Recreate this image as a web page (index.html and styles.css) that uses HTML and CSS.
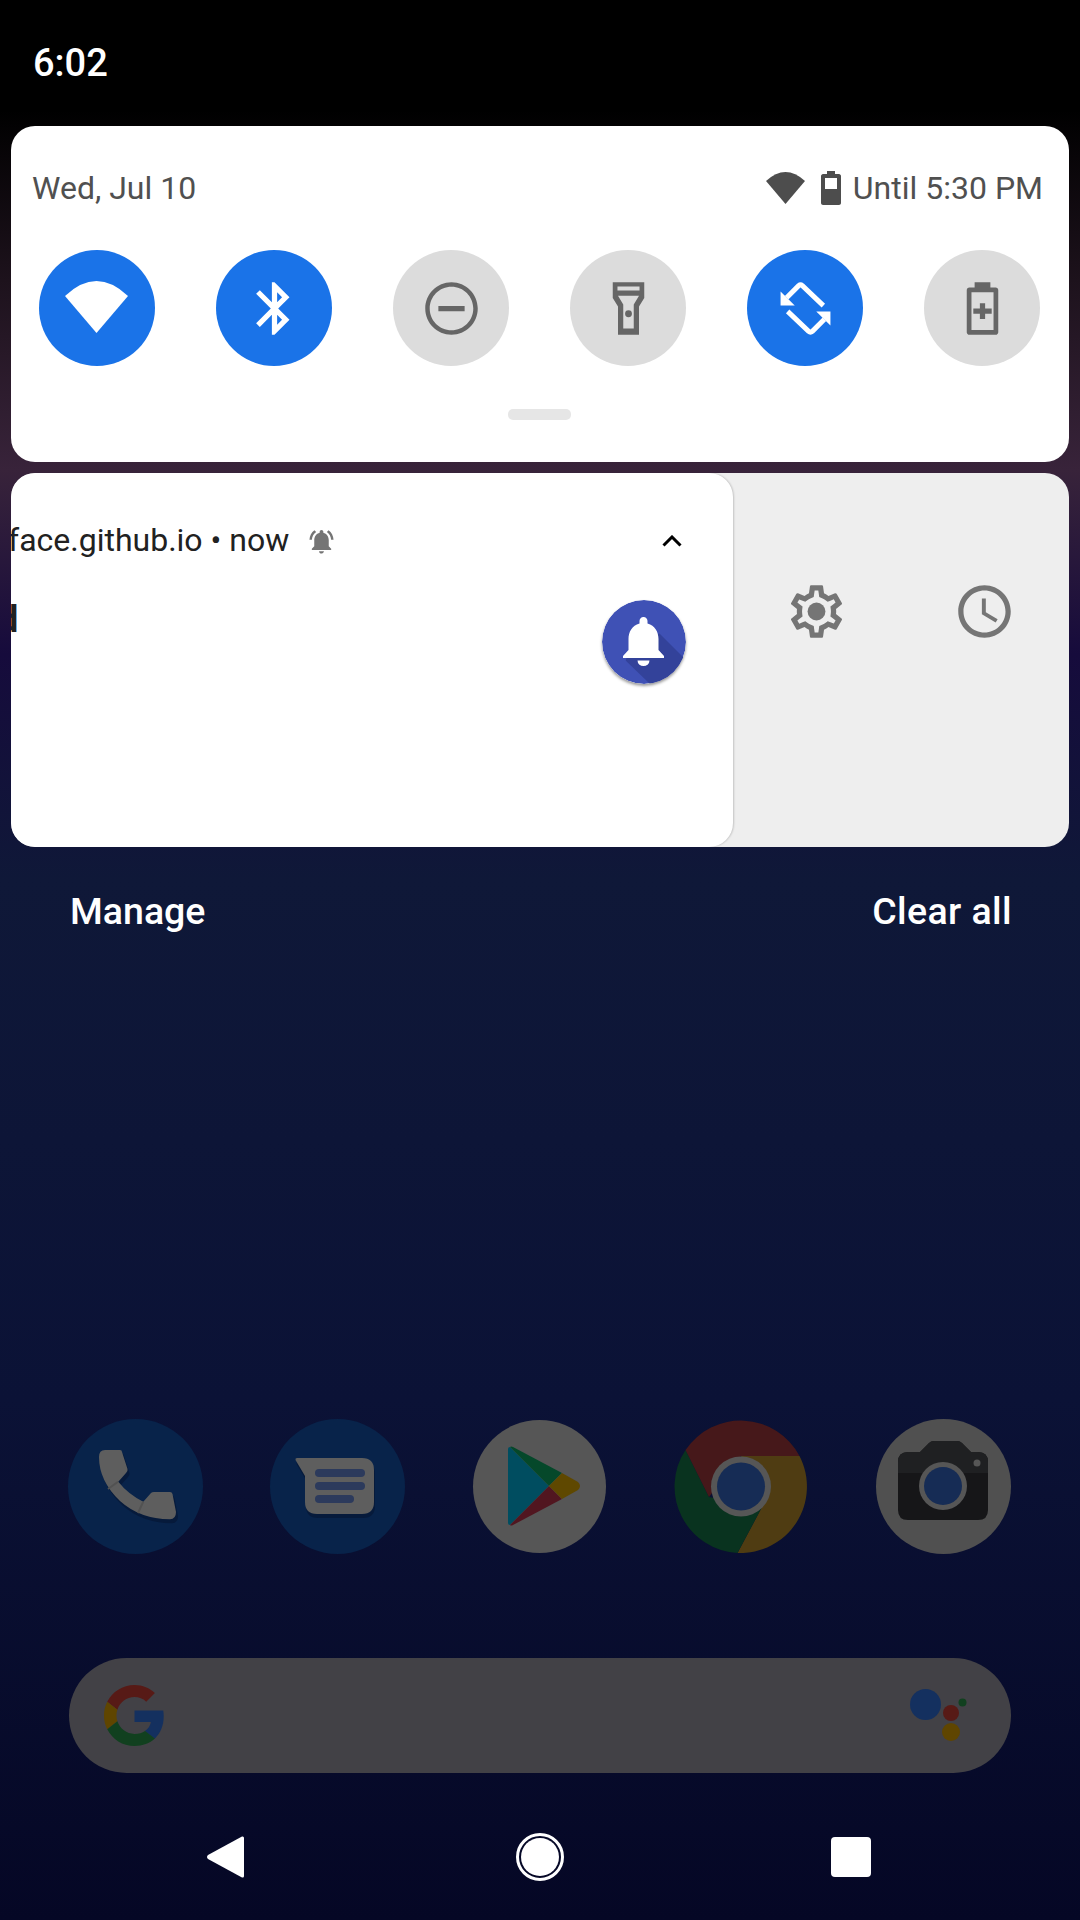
FILE: index.html
```html
<!DOCTYPE html>
<html lang="en">
<head>
  <meta charset="UTF-8" />
  <title>Notification shade</title>
  <link rel="stylesheet" href="styles.css">
</head>
<body>

  <div class="status-bar">6:02</div>

  <div class="card qs-card">
    <div class="qs-header">
      <span>Wed, Jul 10</span>
      <div class="qs-status">
        <svg class="status-wifi" viewBox="0 0 39 32"><path d="M0 9Q19.5 -9 39 9L19.5 32Z"/></svg>
        <svg class="status-battery" viewBox="0 0 20 34"><path fill-rule="evenodd" d="M6 0h8v3h4c1 0 2 1 2 2v27c0 1-1 2-2 2H2c-1 0-2-1-2-2V5c0-1 1-2 2-2h4zM4 7v11h12V7z"/></svg>
        <span>Until 5:30 PM</span>
      </div>
    </div>

    <div class="qs-row">
      <div class="qs-btn on">
        <svg viewBox="0 0 116 116"><path d="M26 46Q57.5 16 89 46L57.5 83Z"/></svg>
      </div>
      <div class="qs-btn on">
        <svg class="qs-icon" viewBox="0 0 24 24"><path d="M17.71 7.71L12 2h-1v7.59L6.41 5 5 6.41 10.59 12 5 17.59 6.41 19 11 14.41V22h1l5.71-5.71-4.3-4.29 4.3-4.29zM13 5.83l1.88 1.88L13 9.59V5.83zm1.88 10.46L13 18.17v-3.76l1.88 1.88z"/></svg>
      </div>
      <div class="qs-btn">
        <svg class="qs-icon" viewBox="0 0 24 24"><path d="M7 11v2h10v-2H7zm5-9C6.48 2 2 6.48 2 12s4.48 10 10 10 10-4.48 10-10S17.52 2 12 2zm0 18.3c-4.6 0-8.3-3.7-8.3-8.3S7.4 3.7 12 3.7s8.3 3.7 8.3 8.3-3.7 8.3-8.3 8.3z"/></svg>
      </div>
      <div class="qs-btn">
        <svg class="qs-icon" viewBox="0 0 24 24"><path fill-rule="evenodd" d="M6 2h12v6l-2 3.2V22H8V11.200L6 8zM7.800 3.600v1.500h8.400V3.600zM8 7.100l2 3.400v9.100h4v-9.100l2-3.400z"/><circle cx="12" cy="14" r="1.300"/></svg>
      </div>
      <div class="qs-btn on">
        <svg class="qs-icon" viewBox="0 0 24 24">
          <g>
            <path class="rotate-arm" d="M18.800 10.900L10.800 3.300Q10.100 2.700 9.400 3.300L4.800 7.900"/>
            <path d="M2.500 5.500V10.900H7.900Z"/>
          </g>
          <g transform="rotate(180 12 12)">
            <path class="rotate-arm" d="M18.800 10.900L10.800 3.300Q10.100 2.700 9.400 3.300L4.800 7.900"/>
            <path d="M2.500 5.500V10.900H7.900Z"/>
          </g>
        </svg>
      </div>
      <div class="qs-btn">
        <svg class="qs-icon" viewBox="0 0 24 24"><path fill-rule="evenodd" d="M9 2h6v2h2c.55 0 1 .45 1 1v16c0 .55-.45 1-1 1H7c-.55 0-1-.45-1-1V5c0-.55.45-1 1-1h2zM7.800 5.800v14.400h8.400V5.800zM11 10h2v2h2.500v2H13v2h-2v-2H8.500v-2H11z"/></svg>
      </div>
    </div>

    <div class="pager"></div>
  </div>

  <div class="card notif-card">
    <div class="notif">
      <div class="notif-head">
        <span class="notif-source">face.github.io • now</span>
        <svg class="notif-alert" viewBox="0 0 24 24"><path d="M7.580 4.080L6.150 2.650C3.750 4.480 2.170 7.300 2.030 10.500h2c.15-2.650 1.510-4.970 3.550-6.420zm12.390 6.420h2c-.15-3.200-1.730-6.020-4.120-7.850l-1.420 1.430c2.020 1.450 3.390 3.770 3.540 6.420zM18 11c0-3.070-1.640-5.640-4.500-6.320V4c0-.83-.67-1.500-1.500-1.500s-1.500.67-1.500 1.500v.68C7.630 5.360 6 7.920 6 11v5l-2 2v1h16v-1l-2-2v-5zm-6 11c.14 0 .27-.01.4-.04.65-.14 1.180-.58 1.440-1.180.1-.24.15-.5.15-.78h-4c.01 1.100.9 2 2.010 2z"/></svg>
        <svg class="notif-chevron" viewBox="0 0 20 12"><path d="M1.500 10.500L10 2l8.500 8.500"/></svg>
      </div>
      <div class="notif-body">
        <span class="notif-title">d</span>
        <svg class="big-bell" viewBox="0 0 84 84">
          <circle cx="42" cy="42" r="42" fill="#3f51b5"/>
          <path fill="#33429a" d="M57 33L84 60 70 80 48 84 21 58Z" clip-path="circle(42px at 42px 42px)"/>
          <path fill="#fff" d="M41.500 17c-2.400 0-4 1.800-4 4v2.500C30 25.500 26.500 32 26.500 39v11L21 56v2h41v-2l-5.500-6V39c0-7-3.500-13.500-11-15.500V21c0-2.200-1.600-4-4-4z"/>
          <path fill="#fff" d="M35.500 60.500h12a6 5.500 0 0 1-12 0z"/>
        </svg>
      </div>
    </div>
    <div class="notif-actions">
      <svg viewBox="0 0 24 24"><path d="M19.430 12.980c.04-.32.07-.64.07-.98 0-.34-.03-.66-.07-.98l2.110-1.650c.19-.15.24-.42.12-.64l-2-3.460c-.09-.16-.26-.25-.44-.25-.06 0-.12.01-.17.03l-2.490 1c-.52-.4-1.080-.73-1.690-.98l-.38-2.650C14.460 2.180 14.250 2 14 2h-4c-.25 0-.46.18-.49.42l-.38 2.650c-.61.25-1.170.59-1.690.98l-2.490-1c-.06-.02-.12-.03-.18-.03-.17 0-.34.09-.43.25l-2 3.460c-.13.22-.07.49.12.64l2.110 1.650c-.04.32-.07.65-.07.98 0 .33.03.66.07.98l-2.110 1.650c-.19.15-.24.42-.12.64l2 3.460c.09.16.26.25.44.25.06 0 .12-.01.17-.03l2.490-1c.52.4 1.080.73 1.690.98l.38 2.650c.03.24.24.42.49.42h4c.25 0 .46-.18.49-.42l.38-2.650c.61-.25 1.170-.59 1.690-.98l2.490 1c.06.02.12.03.18.03.17 0 .34-.09.43-.25l2-3.460c.12-.22.07-.49-.12-.64l-2.110-1.650zm-1.980-1.710c.04.31.05.52.05.73 0 .21-.02.43-.05.73l-.14 1.130.89.7 1.080.84-.7 1.210-1.270-.51-1.040-.42-.9.68c-.43.32-.84.56-1.250.73l-1.060.43-.16 1.130-.2 1.350h-1.400l-.19-1.350-.16-1.130-1.060-.43c-.43-.18-.83-.41-1.230-.71l-.91-.7-1.060.43-1.270.51-.7-1.210 1.080-.84.89-.7-.14-1.130c-.03-.31-.05-.54-.05-.74s.02-.43.05-.73l.14-1.130-.89-.7-1.080-.84.7-1.210 1.270.51 1.040.42.9-.68c.43-.32.84-.56 1.250-.73l1.060-.43.16-1.130.2-1.350h1.390l.19 1.350.16 1.130 1.060.43c.43.18.83.41 1.230.71l.91.7 1.060-.43 1.270-.51.7 1.210-1.070.85-.89.7.14 1.130z"/><circle cx="12" cy="12" r="3.400"/></svg>
      <svg viewBox="0 0 24 24"><path d="M11.990 2C6.470 2 2 6.480 2 12s4.470 10 9.990 10C17.520 22 22 17.520 22 12S17.520 2 11.990 2zM12 20c-4.420 0-8-3.580-8-8s3.580-8 8-8 8 3.580 8 8-3.580 8-8 8zm.5-13H11v6l5.250 3.150.75-1.230-4.500-2.670z"/></svg>
    </div>
  </div>

  <div class="shade-actions">
    <span>Manage</span>
    <span class="clear-all">Clear all</span>
  </div>

  <div class="dock">
    <svg viewBox="0 0 135 135">
      <circle cx="67.500" cy="67.500" r="67.500" fill="#08234a"/>
      <path fill="#061a3b" transform="translate(2 4)" d="M37 31H52Q54 31 54 33L59.500 50Q60 52 58 54L50.300 62.700Q60 75 75.300 82.700L83 74Q84 73 86 73H102Q104 73 104.500 75L108 93Q108 100 102 100.300Q72 100 52 82Q31 62 31 38Q31 31 37 31Z"/>
      <path fill="#5e5e5e" d="M37 31H52Q54 31 54 33L59.500 50Q60 52 58 54L50.300 62.700Q60 75 75.300 82.700L83 74Q84 73 86 73H102Q104 73 104.500 75L108 93Q108 100 102 100.300Q72 100 52 82Q31 62 31 38Q31 31 37 31Z"/>
      <path stroke="#525252" stroke-width="2" fill="none" d="M50 62.700L40 70M75.300 82.700L70 94"/>
    </svg>
    <svg viewBox="0 0 135 135">
      <circle cx="67.500" cy="67.500" r="67.500" fill="#08234a"/>
      <path fill="#061a3b" transform="translate(1 4)" d="M27 39H92Q104 39 104 51V83Q104 95 92 95H47Q35 95 35 83V57L25.500 41Q25 39 27 39Z"/>
      <path fill="#5e5e5e" d="M27 39H92Q104 39 104 51V83Q104 95 92 95H47Q35 95 35 83V57L25.500 41Q25 39 27 39Z"/>
      <rect x="45" y="50" width="50" height="8" rx="4" fill="#2c3a5c"/>
      <rect x="45" y="63" width="50" height="8" rx="4" fill="#2c3a5c"/>
      <rect x="45" y="76" width="39" height="8" rx="4" fill="#2c3a5c"/>
    </svg>
    <svg viewBox="0 0 135 135">
      <circle cx="67.500" cy="67.500" r="66.500" fill="#565656"/>
      <path fill="#004d60" d="M36 30Q36 28 38 28L77 67 38 106Q36 106 36 104Z"/>
      <path fill="#05482a" d="M38 28Q39 27 41 28L90 54 77 67Z"/>
      <path fill="#511620" d="M38 106Q39 107 41 106L90 80 77 67Z"/>
      <path fill="#5f4800" d="M90 54L106 63Q110 67 106 71L90 80 77 67Z"/>
    </svg>
    <svg viewBox="0 0 135 135">
      <path fill="#4f3c12" d="M125.500 37A66.500 66.500 0 0 1 63.500 134L88 88 67 37Z"/>
      <path fill="#09331f" d="M11.500 31A66.500 66.500 0 0 0 63.500 134L88 88 35 78Z"/>
      <path fill="#46181a" d="M11.500 31A66.500 66.500 0 0 1 125.500 37H67L35 78Z"/>
      <circle cx="67" cy="67.500" r="30" fill="#565656"/>
      <circle cx="67" cy="67.500" r="24" fill="#162c55"/>
    </svg>
    <svg viewBox="0 0 135 135">
      <circle cx="67.500" cy="67.500" r="67.500" fill="#505050"/>
      <path fill="#161618" d="M22 43Q22 33 32 33H44L53 24Q55 22 58 22H81Q84 22 86 24L95 33H102Q112 33 112 43V91Q112 101 102 101H32Q22 101 22 91Z"/>
      <path fill="#1f2022" d="M22 54V43Q22 33 32 33H44L53 24Q55 22 58 22H81Q84 22 86 24L95 33H102Q112 33 112 43V54Z"/>
      <circle cx="67" cy="67" r="24" fill="#565656"/>
      <circle cx="67" cy="67" r="19" fill="#162c55"/>
      <circle cx="101" cy="44" r="3.500" fill="#565656"/>
    </svg>
  </div>

  <div class="search">
    <svg class="search-g" viewBox="0 0 48 48">
      <path fill="#571a16" d="M24 9.500c3.540 0 6.710 1.220 9.210 3.600l6.850-6.850C35.900 2.380 30.470 0 24 0 14.620 0 6.510 5.380 2.560 13.220l7.980 6.190C12.430 13.720 17.740 9.500 24 9.500z"/>
      <path fill="#14305f" d="M46.980 24.550c0-1.570-.15-3.090-.38-4.550H24v9.020h12.940c-.58 2.960-2.260 5.480-4.780 7.180l7.730 6c4.510-4.180 7.090-10.360 7.090-17.650z"/>
      <path fill="#5f4500" d="M10.530 28.590c-.48-1.450-.76-2.990-.76-4.590s.27-3.140.76-4.590l-7.980-6.190C.92 16.460 0 20.120 0 24c0 3.880.92 7.540 2.560 10.780l7.970-6.190z"/>
      <path fill="#11401f" d="M24 48c6.480 0 11.930-2.130 16.040-5.810l-7.730-6c-2.150 1.450-4.920 2.300-8.310 2.300-6.260 0-11.570-4.220-13.470-9.910l-7.980 6.190C6.510 42.620 14.620 48 24 48z"/>
    </svg>
    <svg class="search-mic" viewBox="0 0 57 53">
      <circle cx="15.500" cy="15.500" r="15.500" fill="#14305f"/>
      <circle cx="41" cy="24" r="8" fill="#571a16"/>
      <circle cx="52.500" cy="13.500" r="4" fill="#11401f"/>
      <circle cx="41" cy="43" r="9" fill="#5f4500"/>
    </svg>
  </div>

  <div class="nav">
    <svg class="nav-back" viewBox="0 0 37 42"><path d="M35 .5Q37 0 37 2V40Q37 42 35 41.500L1 23Q-1 21 1 19Z"/></svg>
    <div class="nav-home"></div>
    <div class="nav-recent"></div>
  </div>

</body>
</html>
```

FILE: styles.css
```css
body {
  margin: 0;
  width: 1080px;
  height: 1920px;
  overflow: hidden;
  display: flex;
  flex-direction: column;
  font-family: Roboto, "Noto Sans", sans-serif;
  background: linear-gradient(#000 0, #000 110px, #1d121c 280px, #38233a 470px, #160b3c 654px, #0f1838 880px, #0b1236 1400px, #050725 1920px);
}

svg {
  display: block;
}

.status-bar {
  height: 126px;
  padding-left: 33px;
  box-sizing: border-box;
  display: flex;
  align-items: center;
  color: #fff;
  font-size: 38px;
  font-weight: 500;
}

.card {
  margin: 0 11px;
  border-radius: 24px;
  background: #fff;
}

.qs-card {
  height: 336px;
  box-sizing: border-box;
  padding: 32px 26px 42px 21px;
  margin-bottom: 11px;
}

.qs-header {
  height: 60px;
  margin-bottom: 32px;
  display: flex;
  align-items: center;
  justify-content: space-between;
  color: #505050;
  font-size: 32px;
}

.qs-status {
  display: flex;
  align-items: center;
}

.status-wifi {
  width: 39px;
  height: 32px;
  margin-right: 16px;
  fill: #4d4d4d;
}

.status-battery {
  width: 20px;
  height: 34px;
  margin-right: 12px;
  fill: #4d4d4d;
}

.qs-row {
  display: flex;
  justify-content: space-between;
  margin: 0 3px 43px 7px;
}

.qs-btn {
  width: 116px;
  height: 116px;
  border-radius: 50%;
  background: #dcdcdc;
  fill: #666;
  display: flex;
  align-items: center;
  justify-content: center;
}

.qs-btn.on {
  background: #1a73e8;
  fill: #fff;
}

.qs-icon {
  width: 63px;
  height: 63px;
}

.rotate-arm {
  fill: none;
  stroke: #fff;
  stroke-width: 1.900;
}

.pager {
  width: 63px;
  height: 11px;
  margin-left: 476px;
  border-radius: 5px;
  background: #e6e6e6;
}

.notif-card {
  height: 374px;
  display: flex;
  background: #eee;
  overflow: hidden;
}

.notif {
  width: 722px;
  flex: none;
  overflow: hidden;
  background: #fff;
  border-radius: 24px;
  box-shadow: 1px 0 2px rgba(0, 0, 0, 0.18);
}

.notif-head {
  height: 36px;
  margin-top: 50px;
  padding-right: 51px;
  display: flex;
  align-items: center;
}

.notif-source {
  margin-left: -3px;
  padding-bottom: 2px;
  color: #212121;
  font-size: 32px;
  white-space: nowrap;
}

.notif-alert {
  width: 29px;
  height: 29px;
  margin-left: 18px;
  fill: #757575;
}

.notif-chevron {
  width: 20px;
  height: 12px;
  margin-left: auto;
  fill: none;
  stroke: #000;
  stroke-width: 3;
}

.notif-body {
  margin-top: 41px;
  padding-right: 47px;
  display: flex;
  align-items: flex-start;
  justify-content: space-between;
}

.notif-title {
  margin-left: -13px;
  color: #212121;
  font-size: 36px;
  font-weight: 700;
  line-height: 40px;
}

.big-bell {
  width: 84px;
  height: 84px;
  border-radius: 50%;
  box-shadow: 0 2px 3px rgba(0, 0, 0, 0.4);
}

.notif-actions {
  flex: 1;
  padding: 107px 0 0 52px;
  display: flex;
  gap: 105px;
  fill: #757575;
}

.notif-actions svg {
  width: 63px;
  height: 63px;
}

.shade-actions {
  height: 126px;
  padding: 2px 68px 0 70px;
  box-sizing: border-box;
  display: flex;
  align-items: center;
  justify-content: space-between;
  color: #fff;
  font-size: 37.500px;
  font-weight: 500;
}

.clear-all {
  letter-spacing: 0.400px;
}

.dock {
  margin-top: auto;
  padding: 0 69px 0 68px;
  display: flex;
  justify-content: space-between;
}

.dock svg {
  width: 135px;
  height: 135px;
}

.search {
  height: 115px;
  margin: 104px 69px 21px 69px;
  padding: 0 44px 0 35px;
  border-radius: 58px;
  background: #424146;
  display: flex;
  align-items: center;
  justify-content: space-between;
}

.search-g {
  width: 61px;
  height: 63px;
}

.search-mic {
  width: 57px;
  height: 53px;
}

.nav {
  height: 126px;
  padding: 0 209px 0 207px;
  display: flex;
  align-items: center;
  justify-content: space-between;
}

.nav-back {
  width: 37px;
  height: 42px;
  fill: #fff;
}

.nav-home {
  width: 48px;
  height: 48px;
  margin-left: 5px;
  box-sizing: border-box;
  padding: 2px;
  border: 3px solid #fff;
  border-radius: 50%;
  background: #fff;
  background-clip: content-box;
}

.nav-recent {
  width: 40px;
  height: 40px;
  border-radius: 4px;
  background: #fff;
}
```
